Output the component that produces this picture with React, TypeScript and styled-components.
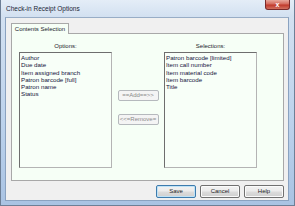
import React from 'react';
import styled, { createGlobalStyle } from 'styled-components';

const GlobalStyle = createGlobalStyle`
  html, body {
    margin: 0;
    padding: 0;
    background: #ffffff;
  }
  body {
    font-family: "Liberation Sans", Arial, sans-serif;
  }
`;

const Window = styled.div`
  width: 295px;
  height: 206px;
  box-sizing: border-box;
  display: flex;
  flex-direction: column;
  padding: 0 5px 4px 4px;
  border: 1px solid #6d7f96;
  border-top: none;
  background: linear-gradient(180deg, #e4edf7 0px, #d3e1f1 16px, #bcd2ec 60%, #a9c3e3 100%);
`;

const TitleBar = styled.div`
  height: 17px;
  display: flex;
  justify-content: space-between;
  align-items: flex-start;
  flex-shrink: 0;
`;

const Title = styled.span`
  font-size: 6.5px;
  line-height: 17px;
  color: #1a2535;
  padding-left: 1px;
`;

const CloseButton = styled.div`
  width: 25px;
  height: 10px;
  box-sizing: border-box;
  margin-right: -1px;
  border: 1px solid #7a2a2a;
  border-top: none;
  border-radius: 0 0 3px 3px;
  background: linear-gradient(180deg, #e8a89c 0%, #d46a5c 45%, #c0392b 55%, #d2705f 100%);
  color: #ffffff;
  font-size: 7px;
  font-weight: bold;
  line-height: 9px;
  text-align: center;
`;

const Client = styled.div`
  flex: 1;
  background: #f0f0f0;
  display: flex;
  flex-direction: column;
  padding: 4px 4px 0 5px;
  border: 1px solid #8aa2c0;
  border-top-color: #98adc6;
`;

const Tabs = styled.div`
  display: flex;
  height: 11px;
`;

const Tab = styled.div`
  width: 58px;
  box-sizing: border-box;
  background: #f6fff6;
  border: 1px solid #a8a8a8;
  border-bottom: none;
  font-size: 6px;
  line-height: 10px;
  text-align: center;
  color: #1c1c2c;
  position: relative;
  top: 1px;
`;

const Panel = styled.div`
  height: 148px;
  box-sizing: border-box;
  background: #f6fff6;
  border: 1px solid #a8a8a8;
  display: grid;
  grid-template-columns: 93px 52px 93px;
  grid-template-rows: 11px 116px;
  padding: 7px 0 0 7px;
`;

const Label = styled.div`
  font-size: 6px;
  line-height: 10px;
  text-align: center;
  color: #1c1c2c;
`;

const ListBox = styled.div`
  box-sizing: border-box;
  background: #f8fff8;
  border: 1px solid;
  border-color: #6e6e6e #b4b4b4 #b4b4b4 #6e6e6e;
  padding: 1px 1px;
`;

const Item = styled.div`
  font-size: 6.2px;
  line-height: 7.3px;
  color: #14143c;
  white-space: nowrap;
`;

const Middle = styled.div`
  display: flex;
  flex-direction: column;
  align-items: center;
  gap: 13px;
  padding-top: 38px;
`;

const MoveButton = styled.div`
  width: 41px;
  height: 11px;
  box-sizing: border-box;
  border: 1px solid #b5b9bd;
  border-radius: 2px;
  background: #f4f4f4;
  color: #8a8a8a;
  font-size: 6px;
  line-height: 9px;
  text-align: center;
  white-space: nowrap;
  overflow: hidden;
`;

const Footer = styled.div`
  display: flex;
  justify-content: flex-end;
  gap: 4px;
  padding: 4px 0 0 0;
`;

const Button = styled.div<{ $default?: boolean }>`
  width: 40px;
  height: 13px;
  box-sizing: border-box;
  border: 1px solid ${p => (p.$default ? '#3d7bad' : '#707070')};
  border-radius: 2px;
  background: linear-gradient(180deg, #f2f2f2 0%, #ebebeb 49%, #dddddd 51%, #cfcfcf 100%);
  box-shadow: inset 0 0 0 1px ${p => (p.$default ? '#bfe3f7' : '#fbfbfb')};
  color: #1c1c1c;
  font-size: 6px;
  line-height: 11px;
  text-align: center;
`;

const options = ['Author', 'Due date', 'Item assigned branch', 'Patron barcode [full]', 'Patron name', 'Status'];
const selections = ['Patron barcode [limited]', 'Item call number', 'Item material code', 'Item barcode', 'Title'];

const App = () => {
  return (
    <>
      <GlobalStyle />
      <Window>
        <TitleBar>
          <Title>Check-in Receipt Options</Title>
          <CloseButton>x</CloseButton>
        </TitleBar>
        <Client>
          <Tabs>
            <Tab>Contents Selection</Tab>
          </Tabs>
          <Panel>
            <Label>Options:</Label>
            <div />
            <Label>Selections:</Label>
            <ListBox>
              {options.map(o => (
                <Item key={o}>{o}</Item>
              ))}
            </ListBox>
            <Middle>
              <MoveButton>==Add==&gt;&gt;</MoveButton>
              <MoveButton>&lt;&lt;=Remove=</MoveButton>
            </Middle>
            <ListBox>
              {selections.map(s => (
                <Item key={s}>{s}</Item>
              ))}
            </ListBox>
          </Panel>
          <Footer>
            <Button $default>Save</Button>
            <Button>Cancel</Button>
            <Button>Help</Button>
          </Footer>
        </Client>
      </Window>
    </>
  );
};

export default App;
